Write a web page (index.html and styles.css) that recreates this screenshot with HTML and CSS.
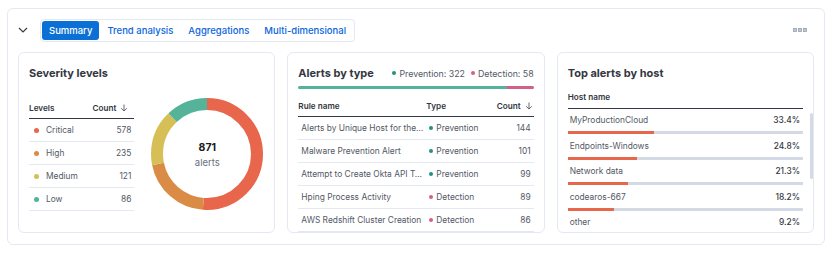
FILE: index.html
```html
<!DOCTYPE html>
<html lang="en">

<head>
    <meta charset="UTF-8">
    <meta name="viewport" content="width=device-width, initial-scale=1.0">
    <title>Alerts summary</title>
    <link rel="stylesheet" href="styles.css">
</head>

<body>
    <div class="panel">
        <!-- Header: collapse toggle, view tabs, actions -->
        <div class="panel-header">
            <button class="collapse" aria-label="Collapse">
                <svg width="10" height="10" viewBox="0 0 10 10"><path d="M1 3 L5 7 L9 3" fill="none" stroke="#343741" stroke-width="1.1"/></svg>
            </button>
            <div class="tabs">
                <button class="tab active">Summary</button>
                <button class="tab">Trend analysis</button>
                <button class="tab">Aggregations</button>
                <button class="tab">Multi-dimensional</button>
            </div>
            <button class="more" aria-label="More actions">
                <svg width="14" height="4" viewBox="0 0 14 4">
                    <rect x="0.5" y="0.5" width="3" height="3" fill="#c3c8d0" stroke="#98a0ab" stroke-width="0.8"/>
                    <rect x="5.5" y="0.5" width="3" height="3" fill="#c3c8d0" stroke="#98a0ab" stroke-width="0.8"/>
                    <rect x="10.5" y="0.5" width="3" height="3" fill="#c3c8d0" stroke="#98a0ab" stroke-width="0.8"/>
                </svg>
            </button>
        </div>

        <div class="cards">
            <!-- Severity levels -->
            <div class="card">
                <h2 class="card-title">Severity levels</h2>
                <div class="severity">
                    <div class="sev-table">
                        <div class="sev-head">
                            <span>Levels</span>
                            <span class="sort">Count
                                <svg width="8" height="8" viewBox="0 0 8 8"><path d="M4 0.5 V7 M1.2 4.3 L4 7 L6.8 4.3" fill="none" stroke="#535966" stroke-width="0.9"/></svg>
                            </span>
                        </div>
                        <div class="sev-row"><span class="level"><i class="dot critical"></i>Critical</span><span>578</span></div>
                        <div class="sev-row"><span class="level"><i class="dot high"></i>High</span><span>235</span></div>
                        <div class="sev-row"><span class="level"><i class="dot medium"></i>Medium</span><span>121</span></div>
                        <div class="sev-row"><span class="level"><i class="dot low"></i>Low</span><span>86</span></div>
                    </div>
                    <div class="donut">
                        <svg width="114" height="114" viewBox="0 0 114 114">
                            <g transform="rotate(-90 57 57)" fill="none" stroke-width="12">
                                <circle cx="57" cy="57" r="50" stroke="#e7664c" stroke-dasharray="160.57 314.16" stroke-dashoffset="0"/>
                                <circle cx="57" cy="57" r="50" stroke="#da8b45" stroke-dasharray="64.58 314.16" stroke-dashoffset="-160.57"/>
                                <circle cx="57" cy="57" r="50" stroke="#d6bf57" stroke-dasharray="50.61 314.16" stroke-dashoffset="-225.15"/>
                                <circle cx="57" cy="57" r="50" stroke="#54b399" stroke-dasharray="38.40 314.16" stroke-dashoffset="-275.76"/>
                            </g>
                        </svg>
                        <div class="donut-label">
                            <strong>871</strong>
                            <span>alerts</span>
                        </div>
                    </div>
                </div>
            </div>

            <!-- Alerts by type -->
            <div class="card">
                <div class="type-head">
                    <h2 class="card-title">Alerts by type</h2>
                    <div class="legend">
                        <span><i class="mini prevention"></i>Prevention: 322</span>
                        <span><i class="mini detection"></i>Detection: 58</span>
                    </div>
                </div>
                <div class="ratio">
                    <div class="ratio-prevention" style="width: 88.5%"></div>
                    <div class="ratio-detection"></div>
                </div>
                <div class="type-table">
                    <div class="type-row type-header">
                        <span>Rule name</span>
                        <span>Type</span>
                        <span class="num sort">Count
                            <svg width="8" height="8" viewBox="0 0 8 8"><path d="M4 0.5 V7 M1.2 4.3 L4 7 L6.8 4.3" fill="none" stroke="#535966" stroke-width="0.9"/></svg>
                        </span>
                    </div>
                    <div class="type-row">
                        <span class="rule">Alerts by Unique Host for the Okta Account</span>
                        <span><i class="mini prevention"></i>Prevention</span>
                        <span class="num">144</span>
                    </div>
                    <div class="type-row">
                        <span class="rule">Malware Prevention Alert</span>
                        <span><i class="mini prevention"></i>Prevention</span>
                        <span class="num">101</span>
                    </div>
                    <div class="type-row">
                        <span class="rule">Attempt to Create Okta API Token</span>
                        <span><i class="mini prevention"></i>Prevention</span>
                        <span class="num">99</span>
                    </div>
                    <div class="type-row">
                        <span class="rule">Hping Process Activity</span>
                        <span><i class="mini detection"></i>Detection</span>
                        <span class="num">89</span>
                    </div>
                    <div class="type-row">
                        <span class="rule">AWS Redshift Cluster Creation</span>
                        <span><i class="mini detection"></i>Detection</span>
                        <span class="num">86</span>
                    </div>
                </div>
            </div>

            <!-- Top alerts by host -->
            <div class="card host-card">
                <h2 class="card-title">Top alerts by host</h2>
                <div class="host-header">Host name</div>
                <div class="host-list">
                    <div class="host-row">
                        <div class="host-line"><span>MyProductionCloud</span><span class="pct">33.4%</span></div>
                        <div class="meter"><div class="meter-fill" style="width: 36.6%"></div></div>
                    </div>
                    <div class="host-row">
                        <div class="host-line"><span>Endpoints-Windows</span><span class="pct">24.8%</span></div>
                        <div class="meter"><div class="meter-fill" style="width: 29.4%"></div></div>
                    </div>
                    <div class="host-row">
                        <div class="host-line"><span>Network data</span><span class="pct">21.3%</span></div>
                        <div class="meter"><div class="meter-fill" style="width: 25.5%"></div></div>
                    </div>
                    <div class="host-row">
                        <div class="host-line"><span>codearos-667</span><span class="pct">18.2%</span></div>
                        <div class="meter"><div class="meter-fill" style="width: 19.6%"></div></div>
                    </div>
                    <div class="host-row">
                        <div class="host-line"><span>other</span><span class="pct">9.2%</span></div>
                        <div class="meter"><div class="meter-fill" style="width: 19.6%"></div></div>
                    </div>
                </div>
                <div class="scroll-thumb"></div>
            </div>
        </div>
    </div>
</body>

</html>
```

FILE: styles.css
```css
body {
    margin: 0;
    font-family: Inter, "Noto Sans", sans-serif;
    color: #343741;
    background: #fff;
}

button {
    font-family: inherit;
    border: none;
    background: none;
    padding: 0;
    cursor: pointer;
}

.panel {
    margin: 8px 13px 0 7px;
    height: 237px;
    box-sizing: border-box;
    padding: 10px 10px 0;
    border: 1px solid #e3e8f2;
    border-radius: 6px;
}

/* Header */
.panel-header {
    display: flex;
    align-items: center;
    height: 22px;
    margin-bottom: 11px;
}

.collapse {
    display: flex;
    width: 10px;
    height: 10px;
    margin-right: 12px;
}

.tabs {
    display: flex;
    gap: 1px;
    padding: 1px;
    border: 1px solid #e3e8f2;
    border-radius: 4px;
}

.tab {
    height: 19px;
    padding: 0 7px;
    font-size: 9.5px;
    font-weight: 500;
    color: #0b64dd;
    border-radius: 3px;
}

.tab.active {
    background: #0b70d6;
    color: #fff;
}

.more {
    display: flex;
    align-items: center;
    justify-content: center;
    width: 24px;
    height: 20px;
    margin-left: auto;
    margin-right: 2px;
}

/* Cards */
.cards {
    display: grid;
    grid-template-columns: repeat(3, 1fr);
    gap: 12px;
}

.card {
    height: 181px;
    box-sizing: border-box;
    padding: 12px 10px 0;
    border: 1px solid #e3e8f2;
    border-radius: 6px;
    overflow: hidden;
}

.card-title {
    margin: 0;
    font-size: 11px;
    font-weight: 700;
    line-height: 16px;
    color: #343741;
}

.sort {
    display: inline-flex;
    align-items: center;
    gap: 4px;
}

/* Severity levels */
.severity {
    display: flex;
    gap: 16px;
    margin-top: 16px;
}

.sev-table {
    width: 107px;
    font-size: 8.2px;
}

.sev-head {
    display: flex;
    justify-content: space-between;
    align-items: center;
    height: 22px;
    box-sizing: border-box;
    padding-right: 6px;
    border-bottom: 1px solid #343741;
    font-weight: 600;
}

.sev-row {
    display: flex;
    justify-content: space-between;
    align-items: center;
    height: 23px;
    box-sizing: border-box;
    padding: 0 3px 0 5px;
    border-bottom: 1px solid #e3e8f2;
    font-size: 8.4px;
    color: #535966;
}

.level {
    display: flex;
    align-items: center;
    gap: 7px;
}

.dot {
    width: 5px;
    height: 5px;
    border-radius: 50%;
}

.dot.critical { background: #e7664c; }
.dot.high { background: #da8b45; }
.dot.medium { background: #d6bf57; }
.dot.low { background: #54b399; }

.donut {
    position: relative;
    width: 114px;
    height: 114px;
}

.donut svg {
    display: block;
}

.donut-label {
    position: absolute;
    inset: 0;
    display: flex;
    flex-direction: column;
    align-items: center;
    justify-content: center;
    gap: 3px;
}

.donut-label strong {
    font-size: 10.5px;
    font-weight: 700;
    color: #1a1c21;
}

.donut-label span {
    font-size: 9.5px;
    color: #69707d;
}

/* Alerts by type */
.type-head {
    display: flex;
    justify-content: space-between;
    align-items: center;
}

.legend {
    display: flex;
    gap: 6px;
    font-size: 8.8px;
    color: #535966;
}

.mini {
    display: inline-block;
    width: 4px;
    height: 4px;
    margin-right: 3px;
    border-radius: 50%;
    vertical-align: middle;
    position: relative;
    top: -1px;
}

.mini.prevention { background: #209280; }
.mini.detection { background: #d36086; }

.ratio {
    display: flex;
    height: 3px;
    margin-top: 5px;
    border-radius: 2px;
    overflow: hidden;
}

.ratio-prevention { background: #54b399; }
.ratio-detection { flex: 1; background: #d36086; }

.type-table {
    margin-top: 6px;
}

.type-row {
    display: grid;
    grid-template-columns: 128px 56px 1fr;
    align-items: center;
    height: 23px;
    box-sizing: border-box;
    padding: 0 3px;
    border-bottom: 1px solid #e3e8f2;
    font-size: 8.4px;
    color: #535966;
    white-space: nowrap;
}

.type-row.type-header {
    height: 22px;
    padding: 0 1px 0 0;
    border-bottom-color: #343741;
    font-size: 8.2px;
    font-weight: 600;
    color: #343741;
}

.rule {
    overflow: hidden;
    text-overflow: ellipsis;
    padding-right: 4px;
}

.num {
    justify-self: end;
}

/* Top alerts by host */
.host-card {
    position: relative;
}

.host-header {
    height: 23px;
    box-sizing: border-box;
    margin-top: 5px;
    padding-top: 6px;
    border-bottom: 1px solid #343741;
    font-size: 8.2px;
    font-weight: 600;
}

.host-row {
    height: 25.5px;
    box-sizing: border-box;
    padding-top: 5px;
}

.host-line {
    display: flex;
    justify-content: space-between;
    height: 12px;
    line-height: 12px;
    padding: 0 3px 0 2px;
    font-size: 8.4px;
    color: #535966;
}

.pct {
    font-weight: 500;
    color: #343741;
}

.meter {
    height: 3px;
    margin-top: 5px;
    background: #d3dae6;
}

.meter-fill {
    height: 100%;
    background: #e7664c;
}

.scroll-thumb {
    position: absolute;
    top: 60px;
    right: 0;
    width: 3px;
    height: 66px;
    border-radius: 2px;
    background: #d3dae6;
}
```
